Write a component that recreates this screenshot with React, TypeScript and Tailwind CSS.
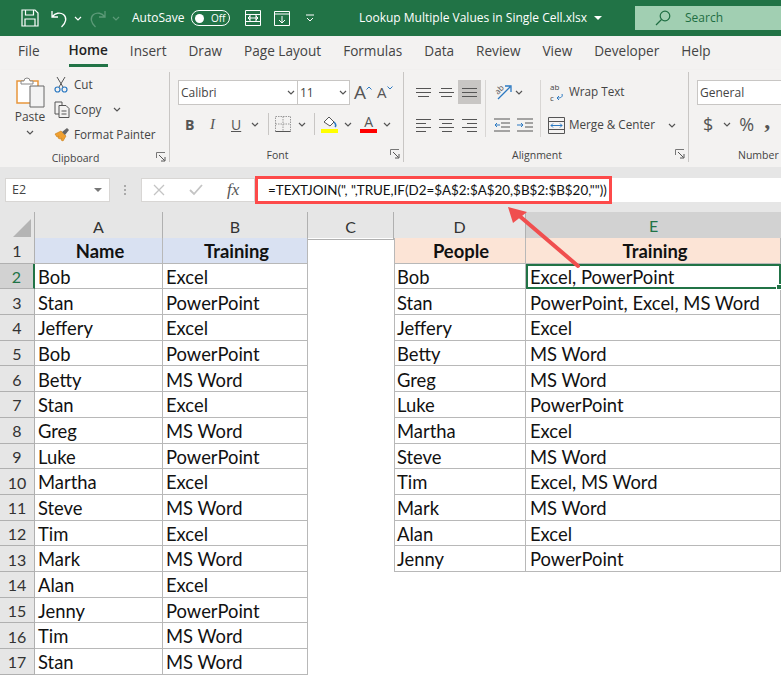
import type { ReactNode } from "react";

const ui = "font-['Open_Sans','Noto_Sans',sans-serif]";
const cellFont = "font-['Lato','Liberation_Sans',sans-serif]";

const leftRows = [
  ["Bob", "Excel"], ["Stan", "PowerPoint"], ["Jeffery", "Excel"], ["Bob", "PowerPoint"],
  ["Betty", "MS Word"], ["Stan", "Excel"], ["Greg", "MS Word"], ["Luke", "PowerPoint"],
  ["Martha", "Excel"], ["Steve", "MS Word"], ["Tim", "Excel"], ["Mark", "MS Word"],
  ["Alan", "Excel"], ["Jenny", "PowerPoint"], ["Tim", "MS Word"], ["Stan", "MS Word"],
];
const rightRows = [
  ["Bob", "Excel, PowerPoint"], ["Stan", "PowerPoint, Excel, MS Word"], ["Jeffery", "Excel"],
  ["Betty", "MS Word"], ["Greg", "MS Word"], ["Luke", "PowerPoint"], ["Martha", "Excel"],
  ["Steve", "MS Word"], ["Tim", "Excel, MS Word"], ["Mark", "MS Word"], ["Alan", "Excel"],
  ["Jenny", "PowerPoint"],
];
const tabs = ["File", "Home", "Insert", "Draw", "Page Layout", "Formulas", "Data", "Review", "View", "Developer", "Help"];

function Chevron({ color = "#555", className = "" }: { color?: string; className?: string }) {
  return (
    <svg width="8" height="5" viewBox="0 0 8 5" className={className}>
      <path d="M1 1l3 3 3-3" fill="none" stroke={color} strokeWidth="1.2" />
    </svg>
  );
}

function Launcher() {
  return (
    <svg width="10" height="10" viewBox="0 0 10 10" className="absolute right-[3px] top-[1px]">
      <path d="M.5 6V.5H9" fill="none" stroke="#777" />
      <path d="M3 3l5.5 5.5M9 5v4H5" fill="none" stroke="#555" />
    </svg>
  );
}

function TitleBar() {
  return (
    <div className={`${ui} flex h-9 items-center bg-[#217346] text-white`}>
      <svg width="18" height="18" viewBox="0 0 18 18" className="ml-[21px]" fill="none" stroke="#fff" strokeWidth="1.2">
        <path d="M1 1h13l3 3v13H1z" />
        <path d="M4.500 1v5h8V1M4 17v-7h10v7" />
      </svg>
      <svg width="17" height="19" viewBox="0 0 17 19" className="ml-[12px]" fill="none" stroke="#fff" strokeWidth="1.3">
        <path d="M1 2v6h6M1.500 7.500C4 4 9 3 12.500 5.500c3.500 3 3 8-2 12.500" />
      </svg>
      <Chevron color="#fff" className="ml-[6px]" />
      <svg width="17" height="19" viewBox="0 0 17 19" className="ml-[7px]" fill="none" stroke="#5c9a78" strokeWidth="1.3">
        <path d="M16 2v6h-6M15.500 7.500C13 4 8 3 4.500 5.500c-3.500 3-3 8 2 12.500" />
      </svg>
      <Chevron color="#5c9a78" className="ml-[6px]" />
      <span className="ml-[12px] w-[52px] whitespace-nowrap text-[12px]">AutoSave</span>
      <span className="ml-[7px] flex h-[16px] w-[39px] items-center rounded-full border border-white pl-[3px]">
        <span className="h-[9px] w-[9px] rounded-full bg-white" />
        <span className="ml-[7px] text-[10px]">Off</span>
      </span>
      <svg width="16" height="16" viewBox="0 0 16 16" className="ml-[15px]" fill="none" stroke="#fff">
        <path d="M.5.500h15v15H.5zM.5 4.500h15M.5 11.500h15M5 4.500v7M11 4.500v7M3 8h10M3 8l2-2M3 8l2 2M13 8l-2-2M13 8l-2 2" />
      </svg>
      <svg width="16" height="16" viewBox="0 0 16 16" className="ml-[13px]" fill="none" stroke="#fff">
        <path d="M.5 1.500h15v14H.5zM.5 4h15M8 6v7M5 10l3 3 3-3" />
      </svg>
      <svg width="8" height="8" viewBox="0 0 8 8" className="ml-[16px]" fill="none" stroke="#fff">
        <path d="M0 1h8M1 4l3 3 3-3" />
      </svg>
      <span className="ml-[45px] w-[228px] whitespace-nowrap text-[12px]">Lookup Multiple Values in Single Cell.xlsx</span>
      <span className="ml-[7px] h-0 w-0 border-x-[4px] border-t-[4px] border-x-transparent border-t-white" />
      <div className="ml-[33px] flex h-6 flex-1 items-center bg-[#a1cfb2] text-[#1f6e43]">
        <svg width="16" height="16" viewBox="0 0 16 16" className="ml-[20px]" fill="none" stroke="#1f6e43" strokeWidth="1.2">
          <circle cx="10" cy="6" r="4.800" />
          <path d="M6.500 9.500L1 15" />
        </svg>
        <span className="ml-[14px] text-[12px]">Search</span>
      </div>
    </div>
  );
}

function TabRow() {
  return (
    <div className={`${ui} flex h-[34px] gap-[22px] bg-[#f3f2f1] pl-[18px] text-[13.6px] text-[#444]`}>
      {tabs.map((t) => (
        <div
          key={t}
          className={
            t === "Home"
              ? "flex h-[31px] items-center border-b-[3px] border-[#217346] font-semibold text-[#222]"
              : t === "File"
                ? "mr-[7px] flex h-[31px] items-center"
                : "flex h-[31px] items-center"
          }
        >
          {t}
        </div>
      ))}
    </div>
  );
}

function Group({ w, label, labelClass = "pr-[18px] text-center", launcher = true, children }: { w: string; label: string; labelClass?: string; launcher?: boolean; children: ReactNode }) {
  return (
    <div className={`${w} mt-[2px] flex h-[90px] shrink-0 flex-col border-r border-[#c8c6c4] pt-[8px] last:border-r-0`}>
      <div className="h-[66px]">{children}</div>
      <div className={`relative mt-[8px] text-[10.5px] leading-[14px] text-[#444] ${labelClass}`}>
        {label}
        {launcher && <Launcher />}
      </div>
    </div>
  );
}

function AlignBars({ lines, active = false }: { lines: string[]; active?: boolean }) {
  return (
    <span className={`flex h-6 w-[23px] flex-col justify-center gap-[3px] ${active ? "bg-[#c8c6c4]" : ""}`}>
      {lines.map((c, i) => (
        <span key={i} className={`h-[1px] bg-[#555] ${c}`} />
      ))}
    </span>
  );
}

function Ribbon() {
  return (
    <div className={`${ui} flex h-[97px] overflow-hidden bg-[#f3f2f1] text-[12px] text-[#444] shadow-[0_2px_3px_rgba(0,0,0,0.18)]`}>
      <Group w="w-[170px]" label="Clipboard">
        <div className="flex">
          <div className="ml-[16px] flex w-[28px] flex-col items-center">
            <svg width="30" height="32" viewBox="0 0 30 32" className="mt-[-4px]">
              <path d="M2 5h21v22H2z" fill="#fff" stroke="#e8963c" strokeWidth="1.500" />
              <path d="M9 5a3 3 0 016 0h3v3H6V5z" fill="#fff" stroke="#888" />
              <path d="M15 10h14v21H15z" fill="#f3f3f3" stroke="#666" />
            </svg>
            <span className="mt-[1px] text-[12px] leading-4">Paste</span>
            <Chevron className="mt-[5px]" />
          </div>
          <div className="ml-[10px] mt-[-4px] flex flex-col gap-[8px] text-[11.7px]">
            <div className="flex h-[17px] items-center gap-[6px]">
              <svg width="14" height="17" viewBox="0 0 14 17" fill="none">
                <path d="M3 1l6 10M11 1L5 11" stroke="#555" />
                <circle cx="3.500" cy="13.500" r="2.500" stroke="#2b79c2" strokeWidth="1.200" />
                <circle cx="10.500" cy="13.500" r="2.500" stroke="#2b79c2" strokeWidth="1.200" />
              </svg>
              <span>Cut</span>
            </div>
            <div className="flex h-[17px] items-center gap-[3px]">
              <svg width="17" height="17" viewBox="0 0 17 17" fill="none" stroke="#555">
                <path d="M1 1h7v3M1 1v12h4" />
                <path d="M5 4.500h7l3 3v9H5zM7.500 10h5M7.500 13h5" />
              </svg>
              <span>Copy</span>
              <Chevron className="ml-[9px]" />
            </div>
            <div className="flex h-[17px] items-center gap-[4px]">
              <svg width="16" height="15" viewBox="0 0 16 15">
                <path d="M1 7l6-3 5 5-3 5-2-1 1-2-2 1-2-1 1-2-2 1z" fill="#f0a030" stroke="#c87a10" strokeWidth=".6" />
                <path d="M8 5l5-4 2 2-4 5z" fill="#666" />
              </svg>
              <span>Format Painter</span>
            </div>
          </div>
        </div>
      </Group>

      <Group w="w-[234px]" label="Font">
        <div className="flex items-center">
          <div className="ml-[8px] flex h-[25px] w-[172px] border border-[#c8c6c4] bg-white">
            <div className="flex flex-1 items-center justify-between border-r border-[#c8c6c4] px-[2px]">
              Calibri <Chevron />
            </div>
            <div className="flex w-[51px] items-center justify-between px-[2px]">
              11 <Chevron />
            </div>
          </div>
          <span className="ml-[4px] text-[19px] leading-none text-[#555]">A</span>
          <svg width="6" height="4" viewBox="0 0 6 4" className="mb-[10px]" fill="none" stroke="#2b79c2"><path d="M.5 3.500L3 1l2.500 2.500" /></svg>
          <span className="ml-[5px] text-[15px] leading-none text-[#555]">A</span>
          <svg width="6" height="4" viewBox="0 0 6 4" className="mb-[10px]" fill="none" stroke="#2b79c2"><path d="M.5.500L3 3l2.500-2.500" /></svg>
        </div>
        <div className="ml-[15px] mt-[7px] flex h-[24px] items-center text-[#555]">
          <span className="w-[25px] text-[14px] font-bold">B</span>
          <span className="w-[21px] font-['Liberation_Serif',serif] text-[15px] italic">I</span>
          <span className="text-[14px] underline">U</span>
          <Chevron className="ml-[10px]" />
          <span className="ml-[9px] h-[22px] w-px bg-[#c8c6c4]" />
          <svg width="16" height="16" viewBox="0 0 16 16" className="ml-[6px]" fill="none" stroke="#999">
            <path d="M.5.500h15v15H.5zM8 .500v15M.5 8h15" strokeDasharray="1.500 1" />
            <path d="M.5 15.500h15" stroke="#555" />
          </svg>
          <Chevron className="ml-[7px]" />
          <span className="ml-[8px] h-[22px] w-px bg-[#c8c6c4]" />
          <span className="ml-[6px] flex w-[17px] flex-col items-center">
            <svg width="15" height="13" viewBox="0 0 15 13" fill="none">
              <path d="M2 6l5-5 5 5-4 4z" stroke="#555" fill="#fff" />
              <path d="M12 6c2 2 2 4 1 5" stroke="#2b79c2" strokeWidth="1.500" />
            </svg>
            <span className="h-[4px] w-[17px] bg-[#ffff00]" />
          </span>
          <Chevron className="ml-[6px]" />
          <span className="ml-[8px] flex w-[17px] flex-col items-center leading-[13px]">
            <span className="text-[14px]">A</span>
            <span className="mt-[1px] h-[4px] w-[17px] bg-[#ff0000]" />
          </span>
          <Chevron className="ml-[6px]" />
        </div>
      </Group>

      <Group w="w-[285px]" label="Alignment">
        <div className="flex">
          <div className="ml-[8px] flex w-[69px] flex-wrap gap-y-[9px]">
            <AlignBars lines={["w-[15px] ml-[4px]", "w-[15px] ml-[4px]", "w-[11px] ml-[6px]"]} />
            <AlignBars lines={["w-[11px] ml-[6px]", "w-[15px] ml-[4px]", "w-[11px] ml-[6px]"]} />
            <AlignBars active lines={["w-[15px] ml-[4px]", "w-[15px] ml-[4px]", "w-[15px] ml-[4px]"]} />
            <AlignBars lines={["w-[15px] ml-[4px]", "w-[10px] ml-[4px]", "w-[15px] ml-[4px]", "w-[10px] ml-[4px]"]} />
            <AlignBars lines={["w-[15px] ml-[4px]", "w-[10px] ml-[7px]", "w-[15px] ml-[4px]", "w-[10px] ml-[7px]"]} />
            <AlignBars lines={["w-[15px] ml-[4px]", "w-[10px] ml-[9px]", "w-[15px] ml-[4px]", "w-[10px] ml-[9px]"]} />
          </div>
          <div className="ml-[4px] flex w-[55px] flex-col gap-y-[9px] border-l border-[#d8d6d4] pl-[8px]">
            <div className="flex h-6 items-center">
              <svg width="18" height="18" viewBox="0 0 18 18" fill="none">
                <text x="1" y="9" fontSize="8" fill="#555" transform="rotate(-45 6 7)">ab</text>
                <path d="M4 16L16 4M11 3h6v6" stroke="#2b79c2" strokeWidth="1.300" />
              </svg>
              <Chevron className="ml-[3px]" />
            </div>
            <div className="flex h-6 items-center gap-[7px]">
              <svg width="16" height="14" viewBox="0 0 16 14" fill="none" stroke="#555">
                <path d="M0 1h16M7 5h9M7 9h9M0 13h16" />
                <path d="M6 7H1M3 5L1 7l2 2" stroke="#2b79c2" />
              </svg>
              <svg width="16" height="14" viewBox="0 0 16 14" fill="none" stroke="#555">
                <path d="M0 1h16M8 5h8M8 9h8M0 13h16" />
                <path d="M0 7h6M4 5l2 2-2 2" stroke="#2b79c2" />
              </svg>
            </div>
          </div>
          <div className="flex flex-col gap-y-[9px] whitespace-nowrap border-l border-[#d8d6d4] pl-[7px]">
            <div className="flex h-6 items-center gap-[4px] pl-[2px]">
              <span className="flex w-[15px] flex-col text-[8px] leading-[11px]">
                <span>ab</span>
                <span className="flex items-center">c
                  <svg width="9" height="8" viewBox="0 0 9 8" fill="none">
                    <path d="M8 0c1 3-1 4-5 4M5 2L3 4l2 2" stroke="#2b79c2" />
                  </svg>
                </span>
              </span>
              <span className="text-[11.7px]">Wrap Text</span>
            </div>
            <div className="flex h-6 items-center gap-[4px]">
              <svg width="17" height="17" viewBox="0 0 17 17" fill="none" stroke="#555">
                <path d="M.5.500h16v16H.5zM.5 4.500h16M.5 12.500h16" />
                <path d="M3 8.500h11M5 6.500l-2 2 2 2M12 6.500l2 2-2 2" stroke="#2b79c2" />
              </svg>
              <span className="text-[11.7px]">Merge &amp; Center</span>
              <Chevron className="ml-[9px]" />
            </div>
          </div>
        </div>
      </Group>

      <Group w="w-[92px]" label="Number" labelClass="pl-[49px]" launcher={false}>
        <div className="ml-[8px] flex h-[25px] w-[100px] items-center border border-[#c8c6c4] bg-white pl-[2px]">General</div>
        <div className="ml-[14px] mt-[7px] flex h-[24px] items-center text-[18px] text-[#555]">
          $<Chevron className="ml-[10px]" />
          <span className="ml-[8px]">%</span>
          <span className="ml-[10px] mb-[8px] font-['Liberation_Serif',serif] text-[24px] font-bold leading-none">,</span>
        </div>
      </Group>
    </div>
  );
}

function FormulaBar() {
  return (
    <div className={`${ui} flex h-[28px] items-center pl-[5px] text-[12.5px] text-[#444]`}>
      <div className="flex h-[24px] w-[105px] items-center justify-between border border-[#d8d6d4] bg-white pl-[6px] pr-[7px]">
        E2
        <span className="h-0 w-0 border-x-[4px] border-t-[4px] border-x-transparent border-t-[#777]" />
      </div>
      <div className="ml-[14px] mr-[15px] flex flex-col gap-[2px]">
        <span className="h-[2px] w-[2px] bg-[#aaa]" />
        <span className="h-[2px] w-[2px] bg-[#aaa]" />
        <span className="h-[2px] w-[2px] bg-[#aaa]" />
      </div>
      <div className="flex h-[24px] w-[114px] items-center border border-[#d8d6d4] bg-white pl-[11px]">
        <svg width="12" height="12" viewBox="0 0 12 12" stroke="#c4c4c4" strokeWidth="1.300">
          <path d="M1 1l10 10M11 1L1 11" />
        </svg>
        <svg width="14" height="12" viewBox="0 0 14 12" className="ml-[24px]" fill="none" stroke="#c4c4c4" strokeWidth="1.800">
          <path d="M1 6l4 4 8-9" />
        </svg>
        <span className="ml-[24px] font-['Liberation_Serif',serif] text-[17px] italic text-[#555]">fx</span>
      </div>
      <div className="z-10 flex h-[28px] w-[357px] items-center border-[3px] border-[#fd4a4a] bg-white pl-[10px] font-['Lato',sans-serif] text-[13.4px] text-[#111]">
        =TEXTJOIN(", ",TRUE,IF(D2=$A$2:$A$20,$B$2:$B$20,""))
      </div>
      <div className="h-[24px] flex-1 bg-white" />
    </div>
  );
}

const gridCols = "grid grid-cols-[35px_128px_145px_86px_132px_255px]";

function ColumnHeader() {
  return (
    <div className={`${gridCols} ${cellFont} h-[26px] bg-[#e6e6e6] text-[16px] text-[#333]`}>
      <div className="relative border-r border-[#b0b0b0]">
        <span className="absolute bottom-[3px] right-[3px] h-0 w-0 border-b-[18px] border-l-[18px] border-b-[#b4b4b4] border-l-transparent" />
      </div>
      {["A", "B", "C", "D"].map((c) => (
        <div key={c} className="flex items-center justify-center border-r border-b border-[#b0b0b0] pt-[2px]">{c}</div>
      ))}
      <div className="flex items-center justify-center border-b-2 border-[#217346] bg-[#d2d2d2] pt-[2px] text-[#217346]">E</div>
    </div>
  );
}

function Row({ n, a, b, d, e, head }: { n: number; a?: string; b?: string; d?: string; e?: string; head?: boolean }) {
  const left = `flex items-center border-r border-b border-[#b8b8b8] pl-[3px] pt-[2px] ${head ? "justify-center bg-[#d9e1f2] font-bold" : ""}`;
  const right = `flex items-center border-r border-b border-[#b8b8b8] pl-[4px] pt-[2px] ${head ? "justify-center bg-[#fce4d6] font-bold" : ""}`;
  const selected = n === 2;
  return (
    <div className={`${gridCols} h-[25.7px] text-[18.4px] leading-none text-[#111]`}>
      <div
        className={`flex items-center justify-center border-b border-[#b0b0b0] pt-[2px] text-[16px] ${
          selected ? "border-r-2 border-r-[#217346] bg-[#d2d2d2] text-[#217346]" : "border-r bg-[#e6e6e6] text-[#333]"
        }`}
      >
        {n}
      </div>
      {a !== undefined ? <div className={left}>{a}</div> : <div />}
      {b !== undefined ? <div className={left}>{b}</div> : <div />}
      <div />
      {d !== undefined ? <div className={`${right} border-l !pl-[2px]`}>{d}</div> : <div />}
      {e !== undefined ? (
        selected ? (
          <div className="relative flex items-center border-2 border-[#217346] pl-[2px] pt-[1px]">
            {e}
            <span className="absolute -bottom-[3px] -right-[3px] h-[6px] w-[6px] border border-white bg-[#217346]" />
          </div>
        ) : (
          <div className={right}>{e}</div>
        )
      ) : (
        <div />
      )}
    </div>
  );
}

export default function App() {
  return (
    <div className="relative h-[676px] w-[781px] overflow-hidden bg-white">
      <TitleBar />
      <TabRow />
      <Ribbon />
      <div className="bg-[#e6e6e6] pb-[8px] pt-[9px]">
        <FormulaBar />
      </div>
      <div className={cellFont}>
        <ColumnHeader />
        <Row n={1} a="Name" b="Training" d="People" e="Training" head />
        {leftRows.map((r, i) => (
          <Row key={i} n={i + 2} a={r[0]} b={r[1]} d={rightRows[i]?.[0]} e={rightRows[i]?.[1]} />
        ))}
      </div>
      <svg width="781" height="676" className="pointer-events-none absolute left-0 top-0">
        <path d="M578 266L516 213" stroke="#f04e4e" strokeWidth="4" strokeLinecap="round" />
        <path d="M508 207l19 5-14 11z" fill="#f04e4e" />
      </svg>
    </div>
  );
}
